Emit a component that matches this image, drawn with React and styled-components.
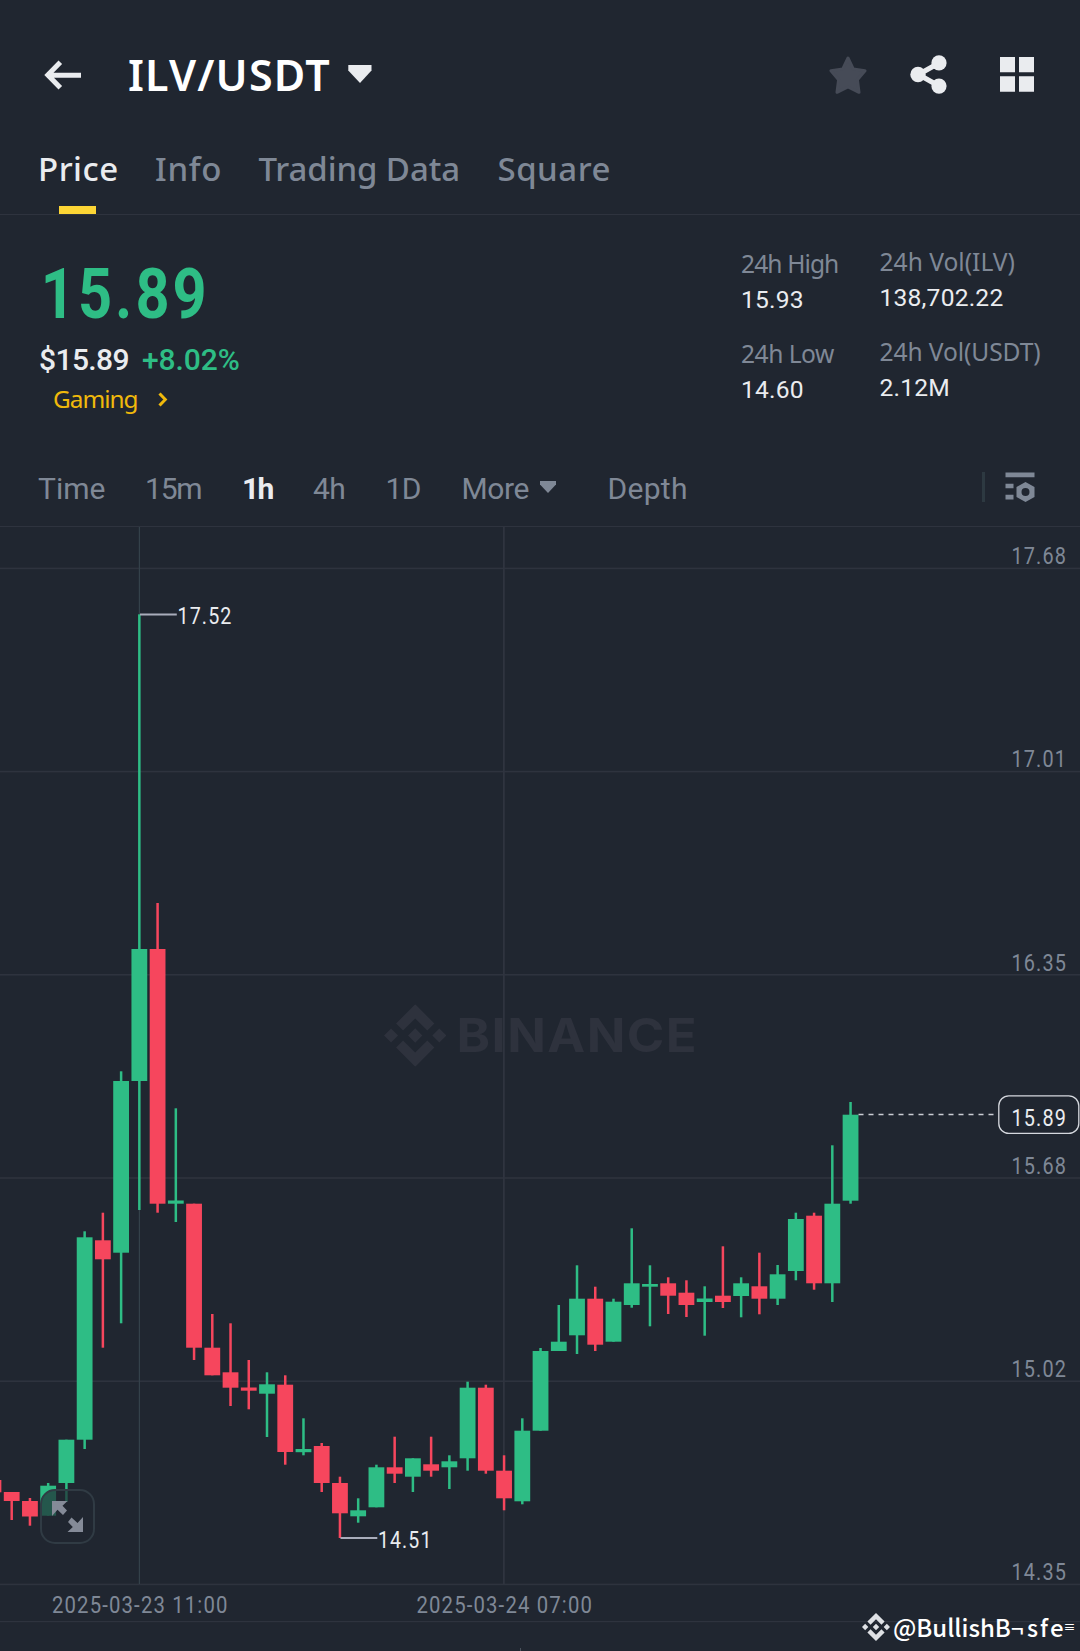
import React from "react";
import styled, { createGlobalStyle } from "styled-components";

const colors = {
  bg: "#202630",
  line: "#2e333e",
  text: "#eaecef",
  muted: "#7f8896",
  green: "#2ebd85",
  red: "#f6465d",
  gold: "#f0b90b",
};

const label = `"Noto Sans", "Open Sans", sans-serif`;
const digits = `Roboto, "Liberation Sans", sans-serif`;

const GlobalStyle = createGlobalStyle`
  * { box-sizing: border-box; }
  body { margin: 0; background: ${colors.bg}; }
`;

const Screen = styled.main`
  position: relative;
  display: flex;
  flex-direction: column;
  width: 1080px;
  height: 1651px;
  overflow: hidden;
  background: ${colors.bg};
  color: ${colors.text};
  white-space: nowrap;
`;

const Header = styled.header`
  display: flex;
  align-items: center;
  height: 145px;
  padding: 45px 45px 40px 44px;
`;

const Title = styled.h1`
  margin: 0 0 0 46px;
  width: 205px;
  font: 600 43px/60px ${label};
  letter-spacing: 1.2px;
  color: #fff;
`;

const TitleCaret = styled.svg`
  margin: -2px 0 0 14.5px;
`;

const Actions = styled.div`
  display: flex;
  align-items: center;
  gap: 43px;
  margin: -1px 0 0 auto;
`;

const Tabs = styled.nav`
  display: flex;
  height: 70px;
  padding-left: 38px;
  border-bottom: 1px solid ${colors.line};
`;

const Tab = styled.a`
  position: relative;
  width: ${(p) => p.$width}px;
  font: 500 33px/48px ${label};
  letter-spacing: ${(p) => p.$spacing}px;
  color: ${(p) => (p.$active ? colors.text : colors.muted)};

  &::after {
    content: "";
    display: ${(p) => (p.$active ? "block" : "none")};
    position: absolute;
    left: 21px;
    bottom: 0;
    width: 37px;
    height: 8px;
    background: #fcd535;
  }
`;

const Ticker = styled.section`
  display: flex;
  justify-content: space-between;
  height: 235px;
`;

const Quote = styled.div`
  display: flex;
  flex-direction: column;
  padding: 44px 0 0 39px;
`;

const LastPrice = styled.div`
  width: 240px;
  padding-left: 2px;
  font: 700 70px/70px ${digits};
  letter-spacing: 3.6px;
  transform: scaleX(0.85);
  transform-origin: left center;
  color: ${colors.green};
`;

const ChangeRow = styled.div`
  display: flex;
  gap: 13px;
  margin-top: 11px;
  font: 500 30px/40px ${digits};
  letter-spacing: -0.6px;
`;

const Change = styled.span`
  letter-spacing: -0.1px;
  color: ${colors.green};
`;

const Category = styled.a`
  display: flex;
  align-items: center;
  gap: 20.5px;
  margin-top: 3px;
  padding-left: 14px;
  font: 400 24.4px/32px ${label};
  letter-spacing: -1px;
  color: ${colors.gold};
`;

const Stats = styled.div`
  display: flex;
  padding-top: 31px;
`;

const StatColumn = styled.div`
  display: flex;
  flex-direction: column;
  gap: 22px;
  width: ${(p) => p.$width}px;
  padding-top: ${(p) => p.$top}px;
`;

const StatLabel = styled.div`
  font: 400 24.6px/32px ${label};
  letter-spacing: ${(p) => p.$spacing}px;
  color: ${colors.muted};
`;

const StatValue = styled.div`
  margin-top: 4px;
  font: 400 24.6px/32px ${digits};
  letter-spacing: 0.2px;
`;

const Intervals = styled.nav`
  display: flex;
  align-items: center;
  height: 77px;
  padding-left: 38px;
  border-bottom: 1px solid ${colors.line};
`;

const Interval = styled.a`
  display: flex;
  align-items: center;
  gap: 11px;
  width: ${(p) => p.$width}px;
  padding-top: 2px;
  font: ${(p) => (p.$active ? 700 : 400)} 30px/40px ${digits};
  letter-spacing: ${(p) => p.$spacing}px;
  color: ${(p) => (p.$active ? colors.text : colors.muted)};
`;

const MoreCaret = styled.svg`
  margin-top: -5px;
`;

const Divider = styled.span`
  width: 3px;
  height: 30px;
  margin: -2px 20px 0 auto;
  background: #2d3941;
`;

const SettingsIcon = styled.svg`
  margin: -2px 45px 0 0;
`;

const ChartArea = styled.section`
  position: relative;
  height: 1124px;
`;

const Chart = styled.svg`
  display: block;

  text {
    font: 400 23px ${digits};
    letter-spacing: 1.3px;
    fill: ${colors.muted};
  }
  text.bright {
    fill: ${colors.text};
  }
  text.brand {
    font: 700 46.8px Inter, sans-serif;
    fill: #2e323d;
  }
`;

const ExpandButton = styled.button`
  position: absolute;
  left: 40px;
  top: 962px;
  display: flex;
  align-items: center;
  justify-content: center;
  width: 55px;
  height: 55px;
  padding: 0;
  border: 2px solid #303b44;
  border-radius: 15px;
  background: rgba(32, 38, 48, 0.68);
`;

const Signature = styled.div`
  position: absolute;
  left: 862px;
  top: 1608.5px;
  display: flex;
  align-items: center;
  height: 36px;
  color: #fff;
`;

const Handle = styled.span`
  width: 118px;
  margin-left: 3px;
  font: 500 24px/36px "Noto Sans CJK SC", sans-serif;
`;

const Fragment = styled.span`
  width: ${(p) => p.$width}px;
  font: 500 ${(p) => p.$size}px/36px "Noto Sans CJK SC", sans-serif;
`;

const UP = "g";
const DOWN = "r";

/* [slot, direction, high, bodyTop, bodyBottom, low] */
const candles = [
  [-8, DOWN, 1480, 1480, 1492.3, 1492.3],
  [-7, DOWN, 1492, 1492, 1501, 1520],
  [-6, DOWN, 1498, 1501, 1516.5, 1525.7],
  [-5, UP, 1483, 1485.7, 1515.7, 1515.7],
  [-4, UP, 1439.7, 1439.7, 1483, 1502],
  [-3, UP, 1231.3, 1237.3, 1439.7, 1449],
  [-2, DOWN, 1212.7, 1240.3, 1259.3, 1347.7],
  [-1, UP, 1071.3, 1081, 1252.7, 1323.3],
  [0, UP, 614.3, 949, 1081, 1210],
  [1, DOWN, 903, 949, 1203.7, 1212.7],
  [2, UP, 1108.3, 1200.5, 1203.7, 1222],
  [3, DOWN, 1203.7, 1203.7, 1347.7, 1360],
  [4, DOWN, 1314, 1347.7, 1375.3, 1375.3],
  [5, DOWN, 1323.3, 1372.3, 1387.7, 1406],
  [6, DOWN, 1360, 1387.5, 1390.7, 1409.3],
  [7, UP, 1372.3, 1384.3, 1393.7, 1437],
  [8, DOWN, 1375.3, 1384.7, 1452, 1464.7],
  [9, UP, 1418.3, 1449, 1452.2, 1455.3],
  [10, DOWN, 1443, 1446, 1483, 1492],
  [11, DOWN, 1476.7, 1483, 1513.3, 1538],
  [12, UP, 1498.3, 1510.3, 1516.3, 1522.7],
  [13, UP, 1464.7, 1467.3, 1507.3, 1507.3],
  [14, DOWN, 1436.7, 1467.3, 1473.7, 1483],
  [15, UP, 1458.3, 1458.3, 1476.7, 1492],
  [16, DOWN, 1436.7, 1464.3, 1470.7, 1476.7],
  [17, UP, 1455.3, 1461.3, 1467.3, 1489],
  [18, UP, 1381.7, 1387.7, 1458.3, 1470.7],
  [19, DOWN, 1384.7, 1387.7, 1470.7, 1473.7],
  [20, DOWN, 1455.3, 1470.7, 1498.3, 1510.3],
  [21, UP, 1418.3, 1430.7, 1501.3, 1504.3],
  [22, UP, 1348, 1351, 1430.7, 1430.7],
  [23, UP, 1305, 1341.7, 1351, 1351],
  [24, UP, 1265.3, 1298.7, 1335.3, 1354],
  [25, DOWN, 1286.7, 1298.7, 1344.7, 1351],
  [26, UP, 1298.7, 1301.7, 1341.7, 1341.7],
  [27, UP, 1228.3, 1283.3, 1305, 1307.7],
  [28, UP, 1265.3, 1284, 1286.7, 1326.3],
  [29, DOWN, 1277.3, 1283.3, 1295.7, 1314],
  [30, DOWN, 1280.3, 1292.7, 1305, 1317],
  [31, UP, 1286.3, 1298.5, 1302, 1335.7],
  [32, DOWN, 1246.3, 1295.7, 1302, 1308],
  [33, UP, 1277.3, 1283.3, 1296, 1317.3],
  [34, DOWN, 1252.7, 1286.3, 1298.7, 1314.3],
  [35, UP, 1265, 1274.3, 1298.7, 1305],
  [36, UP, 1212.7, 1219, 1271, 1280.3],
  [37, DOWN, 1212.7, 1215.7, 1283.3, 1289.7],
  [38, UP, 1145.3, 1203.7, 1283.3, 1302],
  [39, UP, 1102, 1114.7, 1200.7, 1203.7],
];

const priceLevels = [
  ["17.68", 568.4],
  ["17.01", 771.6],
  ["16.35", 974.8],
  ["15.68", 1178],
  ["15.02", 1381.2],
  ["14.35", 1584.4],
];

function Candle({ data }) {
  const [slot, dir, high, top, bottom, low] = data;
  const x = 139.35 + slot * 18.236;
  return (
    <g fill={dir === UP ? colors.green : colors.red}>
      <rect x={x - 1.25} y={high} width="2.5" height={low - high} />
      <rect x={x - 7.9} y={top} width="15.8" height={bottom - top} />
    </g>
  );
}

function BinanceMark({ size, x, y, fill }) {
  return (
    <svg x={x} y={y} width={size} height={size} viewBox="0 0 126.61 126.61" fill={fill}>
      <path d="M38.73 53.2l24.59-24.58 24.6 24.6 14.3-14.31L63.32 0l-38.9 38.9zM0 63.31L14.3 49l14.31 14.31L14.3 77.61zM38.73 73.41l24.59 24.59 24.6-24.6 14.31 14.29-38.9 38.92-38.91-38.88zM98 63.31L112.3 49l14.31 14.3L112.3 77.61zM77.83 63.3L63.32 48.78 48.79 63.3l14.53 14.52z" />
    </svg>
  );
}

function ChartText({ x, y, width, bright, children }) {
  return (
    <text
      className={bright ? "bright" : undefined}
      x={x}
      y={y}
      textLength={width}
      lengthAdjust="spacingAndGlyphs"
    >
      {children}
    </text>
  );
}

function CandleChart() {
  return (
    <Chart width="1080" height="1124" viewBox="0 527 1080 1124">
      <BinanceMark x={384} y={1004.3} size={62.4} fill="#2e323d" />
      <text className="brand" x="456.5" y="1052" textLength="241.5" lengthAdjust="spacingAndGlyphs">
        BINANCE
      </text>
      {priceLevels.map(([price, y]) => (
        <rect key={price} x="0" y={y - 0.8} width="1080" height="1.6" fill={colors.line} />
      ))}
      <rect x="0" y="1621" width="1080" height="1.2" fill={colors.line} />
      <rect x="138.8" y="527" width="1.2" height="1057" fill="#34414a" />
      <rect x="503" y="527" width="1.8" height="1057" fill="#2f343f" />
      {candles.map((c) => (
        <Candle key={c[0]} data={c} />
      ))}
      {priceLevels.map(([price, y]) => (
        <ChartText key={price} x={1011.5} y={y - 4.2} width={55.5}>
          {price}
        </ChartText>
      ))}
      <path d="M140 614.4H176.8M340.5 1538.1H377.3" stroke="#a9adbb" strokeWidth="2" />
      <ChartText bright x={177.5} y={623.7} width={55}>17.52</ChartText>
      <ChartText bright x={378} y={1547.7} width={54.5}>14.51</ChartText>
      <path d="M858.5 1114.6H995" stroke="#c9ccd3" strokeWidth="1.5" strokeDasharray="5 5" />
      <rect x="998.8" y="1095.8" width="80" height="37.6" rx="10" fill={colors.bg} stroke="#d5d8de" strokeWidth="1.3" />
      <ChartText bright x={1011.5} y={1126.3} width={55.5}>15.89</ChartText>
      <ChartText x={52} y={1612.6} width={176.5}>2025-03-23 11:00</ChartText>
      <ChartText x={416.5} y={1612.6} width={176.5}>2025-03-24 07:00</ChartText>
      <rect x="520" y="1648" width="1" height="3" fill="#4a525c" />
    </Chart>
  );
}

const Stat = ({ name, value, spacing }) => (
  <div>
    <StatLabel $spacing={spacing}>{name}</StatLabel>
    <StatValue>{value}</StatValue>
  </div>
);

export default function App() {
  return (
    <>
      <GlobalStyle />
      <Screen>
        <Header>
          <svg width="38" height="30" viewBox="0 0 38 30" fill="none" stroke={colors.text} strokeWidth="5">
            <path d="M3 15.2H37M16.3 2.2L3.8 15L16.3 27.8" />
          </svg>
          <Title>ILV/USDT</Title>
          <TitleCaret width="24" height="18" viewBox="0 0 24 18" fill={colors.text}>
            <path d="M0.3 0H23.5V5.5L12 18L0.3 5.5z" />
          </TitleCaret>
          <Actions>
            <svg width="38" height="38" viewBox="0 0 38 38" fill="#464b57" stroke="#464b57" strokeWidth="3" strokeLinejoin="round">
              <path d="M19 2L24.2 13L36 14.7L28.4 23.8L30 36.3L19 31L8 36.3L9.6 23.8L2 14.7L13.8 13z" />
            </svg>
            <svg width="37" height="39" viewBox="0 0 37 39" fill={colors.text}>
              <path d="M8.5 19.5L29 8M8.5 19.5L29 31" stroke={colors.text} strokeWidth="5" />
              <circle cx="8" cy="19.5" r="7.7" />
              <circle cx="29" cy="7.9" r="7.6" />
              <circle cx="29" cy="31.1" r="7.6" />
            </svg>
            <svg width="45" height="35" viewBox="0 0 45 35" fill={colors.text}>
              <path d="M10 0h15v15.3h-15zM29 0h15v15.3h-15zM10 19.2h15v15.5h-15zM29 19.2h15v15.5h-15z" />
            </svg>
          </Actions>
        </Header>
        <Tabs>
          <Tab $active $width={117} $spacing={0.5}>Price</Tab>
          <Tab $width={103.5} $spacing={0.7}>Info</Tab>
          <Tab $width={239} $spacing={-0.1}>Trading Data</Tab>
          <Tab $width={120} $spacing={0.5}>Square</Tab>
        </Tabs>
        <Ticker>
          <Quote>
            <LastPrice>15.89</LastPrice>
            <ChangeRow>
              <span>$15.89</span>
              <Change>+8.02%</Change>
            </ChangeRow>
            <Category>
              <span>Gaming</span>
              <svg width="10" height="15" viewBox="0 0 10 15" fill="none" stroke={colors.gold} strokeWidth="3">
                <path d="M1.5 1.5L7.3 7.5L1.5 13.5" />
              </svg>
            </Category>
          </Quote>
          <Stats>
            <StatColumn $width={138.5} $top={2}>
              <Stat name="24h High" value="15.93" spacing={-0.9} />
              <Stat name="24h Low" value="14.60" spacing={-0.5} />
            </StatColumn>
            <StatColumn $width={200.5} $top={0}>
              <Stat name="24h Vol(ILV)" value="138,702.22" spacing={0} />
              <Stat name="24h Vol(USDT)" value="2.12M" spacing={-0.1} />
            </StatColumn>
          </Stats>
        </Ticker>
        <Intervals>
          <Interval $width={107} $spacing={0}>Time</Interval>
          <Interval $width={97} $spacing={-1.2}>15m</Interval>
          <Interval $active $width={71} $spacing={-1.6}>1h</Interval>
          <Interval $width={72.5} $spacing={-0.5}>4h</Interval>
          <Interval $width={76} $spacing={-0.5}>1D</Interval>
          <Interval $width={146} $spacing={-0.4}>
            More
            <MoreCaret width="16" height="12" viewBox="0 0 16 12" fill={colors.muted}>
              <path d="M0 0H16V3.5L8 12L0 3.5z" />
            </MoreCaret>
          </Interval>
          <Interval $width={90} $spacing={0.3}>Depth</Interval>
          <Divider />
          <SettingsIcon width="30" height="31" viewBox="0 0 30 31" fill={colors.muted}>
            <path d="M0.5 0.5h29v4.7h-29zM0.5 11.7h8v4.6h-8zM0.5 22.8h8v4.6h-8z" />
            <path fillRule="evenodd" d="M20.5 10L29.5 15V25L20.5 30L11.5 25V15zM20.5 16a4 4 0 1 0 0 8a4 4 0 1 0 0-8z" />
          </SettingsIcon>
        </Intervals>
        <ChartArea>
          <CandleChart />
          <ExpandButton aria-label="Expand chart">
            <svg width="31" height="31" viewBox="0 0 31 31" fill="#858b98">
              <path d="M0 0H15.5L10.5 4.8L15 9.5L11 14L5.5 8.7L0 15zM31 31H15.5L20.8 26L16 21L19.5 16.5L25.5 22L31 16z" />
            </svg>
          </ExpandButton>
        </ChartArea>
        <Signature>
          <BinanceMark size={28} fill="#dfe1e5" />
          <Handle>@BullishB</Handle>
          <Fragment $width={16} $size={22}>¬</Fragment>
          <Fragment $width={13} $size={23}>s</Fragment>
          <Fragment $width={10} $size={23}>f</Fragment>
          <Fragment $width={13.5} $size={24}>e</Fragment>
          <Fragment $width={13} $size={12}>≡</Fragment>
        </Signature>
      </Screen>
    </>
  );
}
